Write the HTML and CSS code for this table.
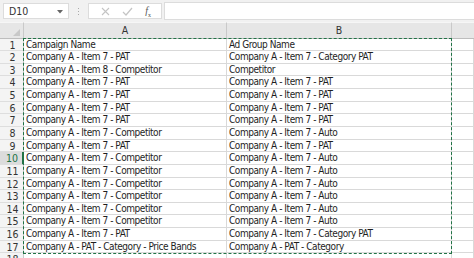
FILE: index.html
```html
<!DOCTYPE html>
<html lang="en">
<head>
  <meta charset="UTF-8" />
  <title>Sheet1</title>
  <link rel="stylesheet" href="styles.css">
</head>
<body>
  <div class="formula-bar">
    <div class="name-box">
      <span>D10</span>
      <svg class="caret" width="6" height="4" viewBox="0 0 6 4"><path d="M0 0h6L3 3.5z" fill="#666"/></svg>
    </div>
    <div class="grip"><i></i><i></i><i></i></div>
    <div class="fx-box">
      <svg width="9" height="9" viewBox="0 0 9 9"><path d="M1 1l7 7M8 1L1 8" stroke="#c4c4c4" stroke-width="1.1"/></svg>
      <svg width="11" height="9" viewBox="0 0 11 9"><path d="M1 5l3 3 6-7" stroke="#c4c4c4" stroke-width="1.2" fill="none"/></svg>
      <span class="fx"><em>f</em><sub>x</sub></span>
    </div>
    <div class="formula-input"></div>
  </div>

  <div class="sheet">
    <div class="grid">
      <div class="corner"><svg width="7" height="7" viewBox="0 0 7 7"><path d="M7 0v7H0z" fill="#c8c8c8"/></svg></div>
      <div class="col-head">A</div>
      <div class="col-head">B</div>
      <div class="col-head last"></div>
    </div>
    <div class="grid body" id="rows"></div>
    <div class="marquee"></div>
  </div>

  <script>
    const data = [
      ["Campaign Name", "Ad Group Name"],
      ["Company A - Item 7 - PAT", "Company A - Item 7 - Category PAT"],
      ["Company A - Item 8 - Competitor", "Competitor"],
      ["Company A - Item 7 - PAT", "Company A - Item 7 - PAT"],
      ["Company A - Item 7 - PAT", "Company A - Item 7 - PAT"],
      ["Company A - Item 7 - PAT", "Company A - Item 7 - PAT"],
      ["Company A - Item 7 - PAT", "Company A - Item 7 - PAT"],
      ["Company A - Item 7 - Competitor", "Company A - Item 7 - Auto"],
      ["Company A - Item 7 - PAT", "Company A - Item 7 - PAT"],
      ["Company A - Item 7 - Competitor", "Company A - Item 7 - Auto"],
      ["Company A - Item 7 - Competitor", "Company A - Item 7 - Auto"],
      ["Company A - Item 7 - Competitor", "Company A - Item 7 - Auto"],
      ["Company A - Item 7 - Competitor", "Company A - Item 7 - Auto"],
      ["Company A - Item 7 - Competitor", "Company A - Item 7 - Auto"],
      ["Company A - Item 7 - Competitor", "Company A - Item 7 - Auto"],
      ["Company A - Item 7 - PAT", "Company A - Item 7 - Category PAT"],
      ["Company A - PAT - Category - Price Bands", "Company A - PAT - Category"],
      ["", ""]
    ];

    const rows = document.getElementById("rows");
    data.forEach(function (r, i) {
      const num = document.createElement("div");
      num.className = "row-head" + (i === 9 ? " active" : "");
      num.textContent = i + 1;
      rows.appendChild(num);
      r.concat([""]).forEach(function (v) {
        const cell = document.createElement("div");
        cell.className = "cell";
        cell.textContent = v;
        rows.appendChild(cell);
      });
    });
  </script>
</body>
</html>
```

FILE: styles.css
```css
body {
  margin: 0;
  width: 474px;
  height: 258px;
  overflow: hidden;
  background: #fff;
  font-family: "DejaVu Sans Condensed", "DejaVu Sans", sans-serif;
  color: #1e1e1e;
}
.formula-bar {
  display: flex;
  align-items: center;
  height: 22px;
  background: #f1f1f1;
  padding-left: 3px;
  box-sizing: border-box;
}
.name-box {
  width: 66px;
  height: 16px;
  box-sizing: border-box;
  background: #fff;
  border: 1px solid #dcdcdc;
  display: flex;
  align-items: center;
  justify-content: space-between;
  padding: 0 5px 0 5px;
  font-size: 10.5px;
  color: #333;
}
.caret {
  margin-top: 1px;
}
.grip {
  width: 19px;
  display: flex;
  flex-direction: column;
  align-items: center;
  gap: 2px;
}
.grip i {
  width: 1px;
  height: 1px;
  background: #aaa;
}
.fx-box {
  width: 74px;
  height: 16px;
  box-sizing: border-box;
  background: #fff;
  border: 1px solid #dcdcdc;
  display: flex;
  align-items: center;
  justify-content: space-around;
  padding: 0 4px 0 6px;
}
.fx {
  font-family: "Liberation Serif", serif;
  font-size: 10px;
  color: #555;
}
.fx sub {
  font-size: 6px;
}
.formula-input {
  flex: 1;
  height: 16px;
  margin-left: 2px;
  background: #fff;
  border: 1px solid #dcdcdc;
  border-right: none;
}

.sheet {
  position: relative;
}
.grid {
  display: grid;
  grid-template-columns: 24px 203px 225px 22px;
}
.corner,
.col-head {
  height: 16.5px;
  box-sizing: border-box;
  background: #e6e6e6;
  border-right: 1px solid #c9c9c9;
  border-bottom: 1px solid #bdbdbd;
  border-top: 1px solid #f6f6f6;
}
.corner {
  display: flex;
  align-items: flex-end;
  justify-content: flex-end;
  padding: 0 3px 2px 0;
}
.col-head {
  text-align: center;
  font-size: 10.5px;
  line-height: 15px;
  color: #333;
}
.col-head.last {
  border-right: none;
}
.body {
  grid-auto-rows: 12.65px;
}
.row-head {
  background: #f4f4f4;
  border-right: 1px solid #c9c9c9;
  border-bottom: 1px solid #dedede;
  box-sizing: border-box;
  font-size: 10.5px;
  line-height: 12px;
  text-align: center;
  padding-left: 2px;
  color: #333;
}
.row-head.active {
  background: #dcdcdc;
  color: #217346;
  border-right: 2px solid #217346;
}
.cell {
  border-right: 1px solid #d9d9d9;
  border-bottom: 1px solid #d9d9d9;
  box-sizing: border-box;
  font-size: 10px;
  letter-spacing: -0.45px;
  line-height: 12px;
  padding-left: 2px;
  white-space: nowrap;
  overflow: hidden;
}

/* copy marquee around A1:B17 */
.marquee {
  position: absolute;
  left: 23px;
  top: 15.5px;
  width: 429px;
  height: 216px;
  box-sizing: border-box;
  border: 1.5px dashed #217346;
  pointer-events: none;
}
```
